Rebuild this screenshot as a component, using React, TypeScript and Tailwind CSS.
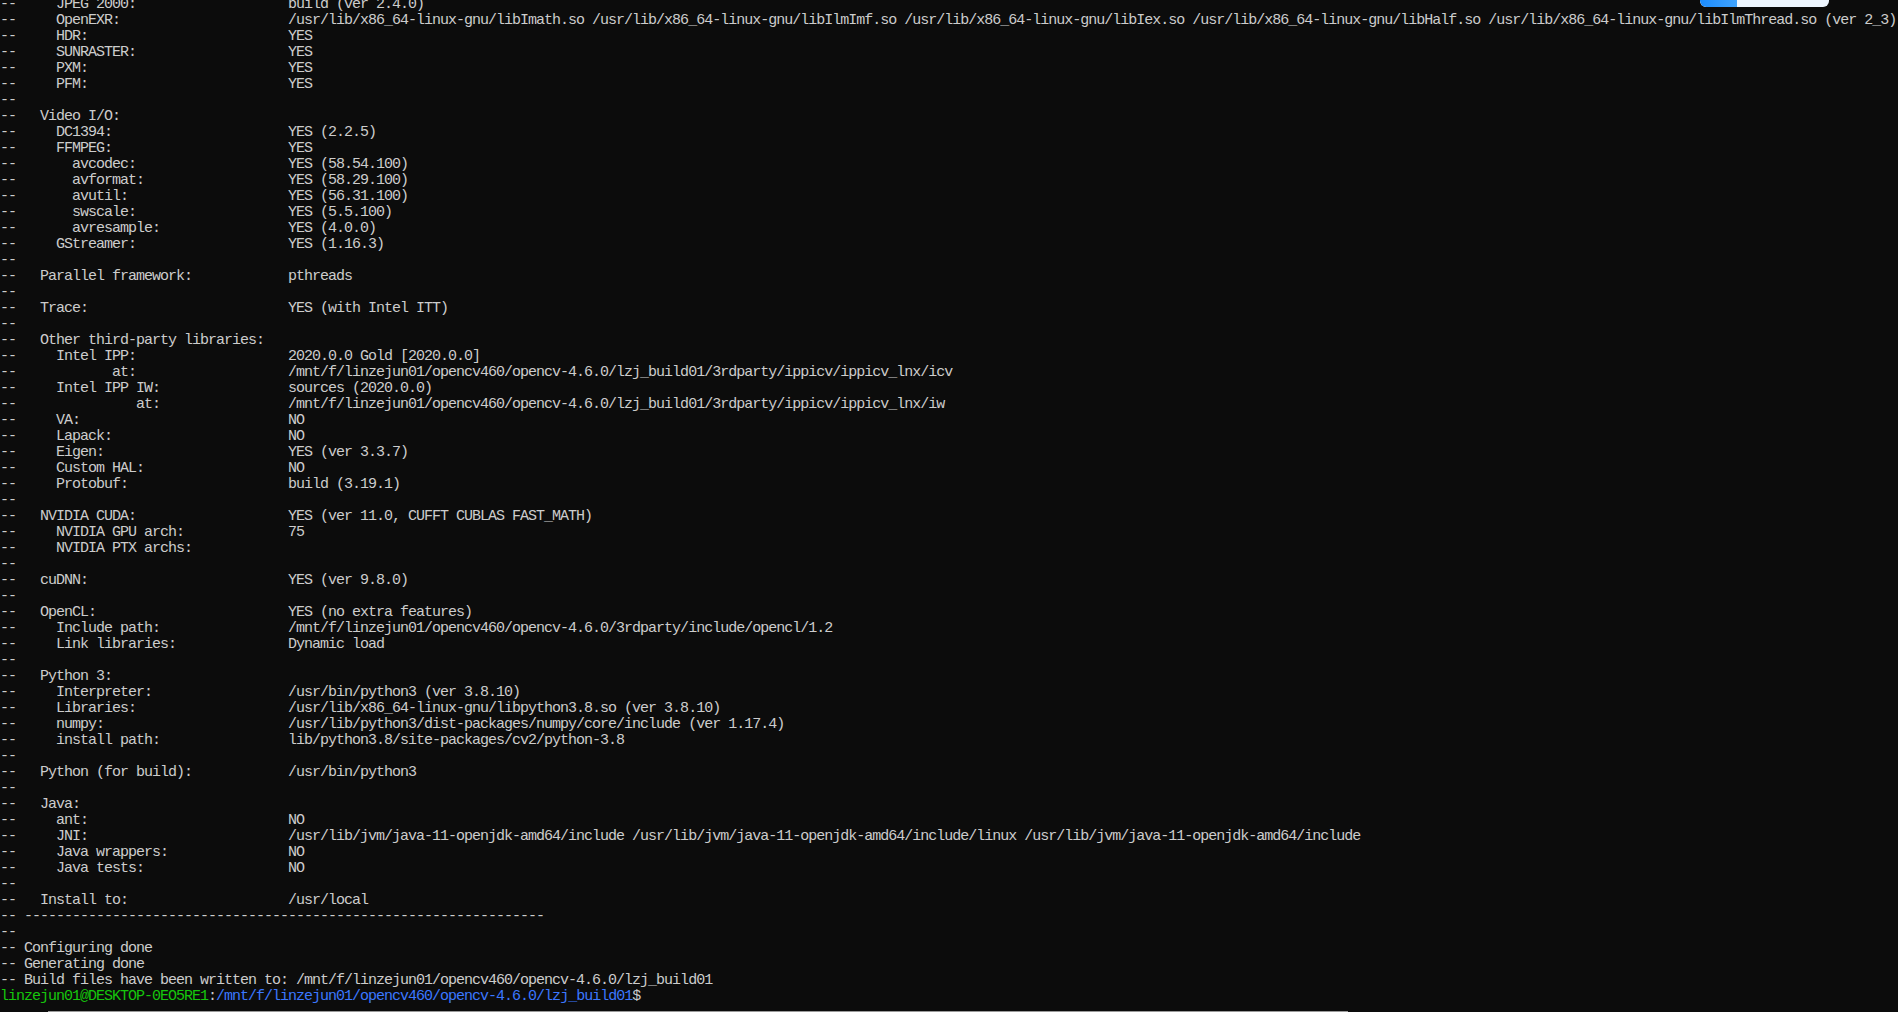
import React from "react";

const lines: string[] = [
  "--     JPEG 2000:                   build (ver 2.4.0)",
  "--     OpenEXR:                     /usr/lib/x86_64-linux-gnu/libImath.so /usr/lib/x86_64-linux-gnu/libIlmImf.so /usr/lib/x86_64-linux-gnu/libIex.so /usr/lib/x86_64-linux-gnu/libHalf.so /usr/lib/x86_64-linux-gnu/libIlmThread.so (ver 2_3)",
  "--     HDR:                         YES",
  "--     SUNRASTER:                   YES",
  "--     PXM:                         YES",
  "--     PFM:                         YES",
  "--",
  "--   Video I/O:",
  "--     DC1394:                      YES (2.2.5)",
  "--     FFMPEG:                      YES",
  "--       avcodec:                   YES (58.54.100)",
  "--       avformat:                  YES (58.29.100)",
  "--       avutil:                    YES (56.31.100)",
  "--       swscale:                   YES (5.5.100)",
  "--       avresample:                YES (4.0.0)",
  "--     GStreamer:                   YES (1.16.3)",
  "--",
  "--   Parallel framework:            pthreads",
  "--",
  "--   Trace:                         YES (with Intel ITT)",
  "--",
  "--   Other third-party libraries:",
  "--     Intel IPP:                   2020.0.0 Gold [2020.0.0]",
  "--            at:                   /mnt/f/linzejun01/opencv460/opencv-4.6.0/lzj_build01/3rdparty/ippicv/ippicv_lnx/icv",
  "--     Intel IPP IW:                sources (2020.0.0)",
  "--               at:                /mnt/f/linzejun01/opencv460/opencv-4.6.0/lzj_build01/3rdparty/ippicv/ippicv_lnx/iw",
  "--     VA:                          NO",
  "--     Lapack:                      NO",
  "--     Eigen:                       YES (ver 3.3.7)",
  "--     Custom HAL:                  NO",
  "--     Protobuf:                    build (3.19.1)",
  "--",
  "--   NVIDIA CUDA:                   YES (ver 11.0, CUFFT CUBLAS FAST_MATH)",
  "--     NVIDIA GPU arch:             75",
  "--     NVIDIA PTX archs:",
  "--",
  "--   cuDNN:                         YES (ver 9.8.0)",
  "--",
  "--   OpenCL:                        YES (no extra features)",
  "--     Include path:                /mnt/f/linzejun01/opencv460/opencv-4.6.0/3rdparty/include/opencl/1.2",
  "--     Link libraries:              Dynamic load",
  "--",
  "--   Python 3:",
  "--     Interpreter:                 /usr/bin/python3 (ver 3.8.10)",
  "--     Libraries:                   /usr/lib/x86_64-linux-gnu/libpython3.8.so (ver 3.8.10)",
  "--     numpy:                       /usr/lib/python3/dist-packages/numpy/core/include (ver 1.17.4)",
  "--     install path:                lib/python3.8/site-packages/cv2/python-3.8",
  "--",
  "--   Python (for build):            /usr/bin/python3",
  "--",
  "--   Java:",
  "--     ant:                         NO",
  "--     JNI:                         /usr/lib/jvm/java-11-openjdk-amd64/include /usr/lib/jvm/java-11-openjdk-amd64/include/linux /usr/lib/jvm/java-11-openjdk-amd64/include",
  "--     Java wrappers:               NO",
  "--     Java tests:                  NO",
  "--",
  "--   Install to:                    /usr/local",
  "-- -----------------------------------------------------------------",
  "--",
  "-- Configuring done",
  "-- Generating done",
  "-- Build files have been written to: /mnt/f/linzejun01/opencv460/opencv-4.6.0/lzj_build01",
];

export default function App() {
  return (
    <div className="relative h-[1012px] w-[1898px] overflow-hidden bg-[#0c0c0c]">
      <div
        className="mt-[-3px] whitespace-pre text-[15px] leading-[16px] tracking-[-1px] text-[#cccccc]"
        style={{ fontFamily: '"Liberation Mono", "Noto Sans CJK SC", monospace' }}
      >
        {lines.map((l, i) => (
          <div key={i} className="h-[16px]">
            {l}
          </div>
        ))}
        <div className="h-[16px]">
          <span className="text-[#16c60c]">linzejun01@DESKTOP-0EO5RE1</span>
          <span>:</span>
          <span className="text-[#3b78ff]">/mnt/f/linzejun01/opencv460/opencv-4.6.0/lzj_build01</span>
          <span>$</span>
        </div>
      </div>
      <div className="absolute left-[1700px] top-[-10px] flex h-[17px] w-[129px] overflow-hidden rounded-b-[6px] rounded-t-none bg-[#eef6ff]">
        <div className="h-full w-[37px] rounded-bl-[6px] bg-gradient-to-r from-[#1a8cff] to-[#3fa4ff]" />
      </div>
      <div className="absolute bottom-0 left-[48px] h-[1px] w-[1300px] bg-[#9a9a9a]" />
    </div>
  );
}
